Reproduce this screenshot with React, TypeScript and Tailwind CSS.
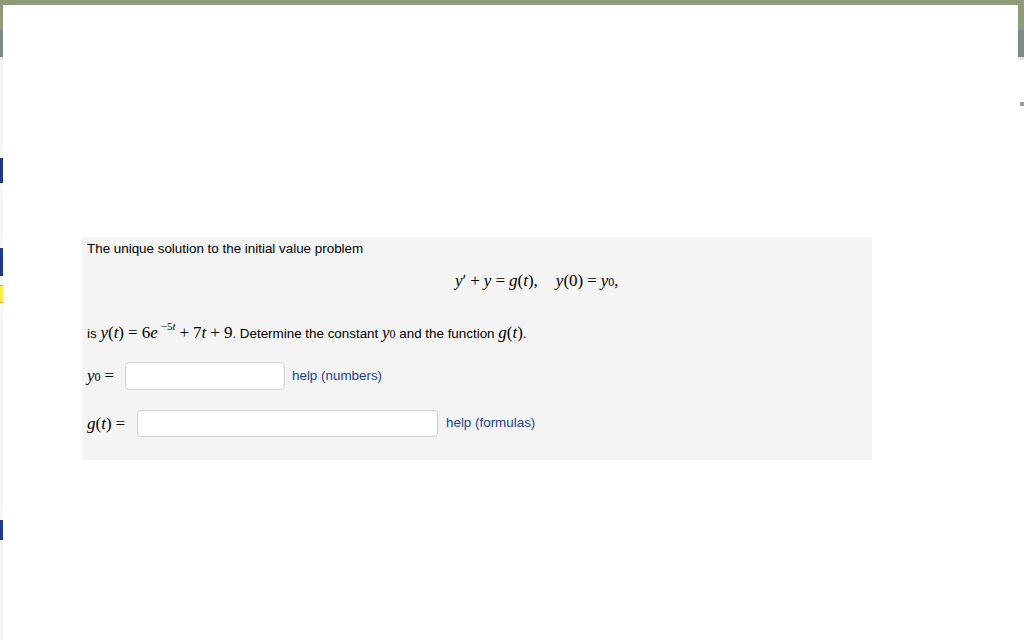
import React from 'react';

const MATH = { fontFamily: '"Liberation Serif", "DejaVu Serif", serif' };

function M({ children, i = true }: { children: React.ReactNode; i?: boolean }) {
  return (
    <span className={i ? 'italic' : ''} style={MATH}>
      {children}
    </span>
  );
}

function Op({ children }: { children: React.ReactNode }) {
  return <span className="px-[4px]" style={MATH}>{children}</span>;
}

export default function App() {
  return (
    <div className="relative w-[1024px] h-[640px] overflow-hidden bg-white font-['Liberation_Sans',Arial,sans-serif]">
      {/* background chrome */}
      <div className="flex flex-col h-full">
        <div className="h-[30px] bg-[#8e9a78] shrink-0" />
        <div className="h-[27px] bg-[#7b8b89] shrink-0" />
        <div className="h-[3px] bg-[#e6e6e6] shrink-0" />
        <div className="flex flex-1">
          <div className="w-[3px] bg-[#f5f5f5] flex flex-col">
            <div className="h-[98px]" />
            <div className="h-[25px] bg-[#1f3a8c]" />
            <div className="h-[65px]" />
            <div className="h-[28px] bg-[#1f3a8c]" />
            <div className="h-[9px]" />
            <div className="h-[18px] bg-[#ffee44] border-y border-[#e8a23c]" />
            <div className="h-[217px]" />
            <div className="h-[20px] bg-[#1f3a8c]" />
          </div>
          <div className="flex-1" />
          <div className="w-[6px] flex flex-col">
            <div className="h-[42px]" />
            <div className="h-[4px] w-[4px] ml-[2px] bg-[#999]" />
          </div>
        </div>
      </div>

      {/* main panel overlays the chrome */}
      <div className="absolute left-[3px] top-[5px] w-[1015px] bottom-0 bg-white pl-[79px] pt-[232px]">
        <div className="w-[790px] h-[223px] bg-[#f4f4f4] pl-[5px] pt-[4px] text-[13.4px] text-black">
          <div className="leading-[16px]">The unique solution to the initial value problem</div>

          <div className="pl-[368px] mt-[13px] text-[17px] leading-[22px]">
            <M>y</M><M i={false}>′</M>
            <Op>+</Op>
            <M>y</M>
            <Op>=</Op>
            <M>g</M><M i={false}>(</M><M>t</M><M i={false}>),</M>
            <span className="inline-block w-[18px]" />
            <M>y</M><M i={false}>(0)</M>
            <Op>=</Op>
            <M>y</M><M i={false}><span className="text-[12px]">0</span>,</M>
          </div>

          <div className="mt-[29px] leading-[22px]">
            is <span className="text-[17px]"><M>y</M><M i={false}>(</M><M>t</M><M i={false}>)</M>
            <Op>=</Op>
            <M i={false}>6</M><M>e</M>
            <span className="text-[11px] relative top-[-8px] pl-[3px]"><M i={false}>−5</M><M>t</M></span>
            <Op>+</Op>
            <M i={false}>7</M><M>t</M>
            <Op>+</Op>
            <M i={false}>9</M></span>. Determine the constant <span className="text-[17px]"><M>y</M><M i={false}><span className="text-[12px]">0</span></M></span> and the function <span className="text-[17px]"><M>g</M><M i={false}>(</M><M>t</M><M i={false}>)</M></span>.
          </div>

          <div className="flex items-center mt-[17px] h-[28px]">
            <div className="w-[38px] text-[17px] whitespace-nowrap">
              <M>y</M><M i={false}><span className="text-[12px]">0</span></M>
              <Op>=</Op>
            </div>
            <div className="w-[160px] h-[28px] bg-white border border-[#cfcfcf] rounded-[4px]" />
            <a className="ml-[7px] text-[#1e3f8f]">help (numbers)</a>
          </div>

          <div className="flex items-center mt-[20px] h-[27px]">
            <div className="w-[50px] text-[17px] whitespace-nowrap">
              <M>g</M><M i={false}>(</M><M>t</M><M i={false}>)</M>
              <Op>=</Op>
            </div>
            <div className="w-[301px] h-[27px] bg-white border border-[#cfcfcf] rounded-[4px]" />
            <a className="ml-[8px] text-[#1e3f8f]">help (formulas)</a>
          </div>
        </div>
      </div>
    </div>
  );
}
